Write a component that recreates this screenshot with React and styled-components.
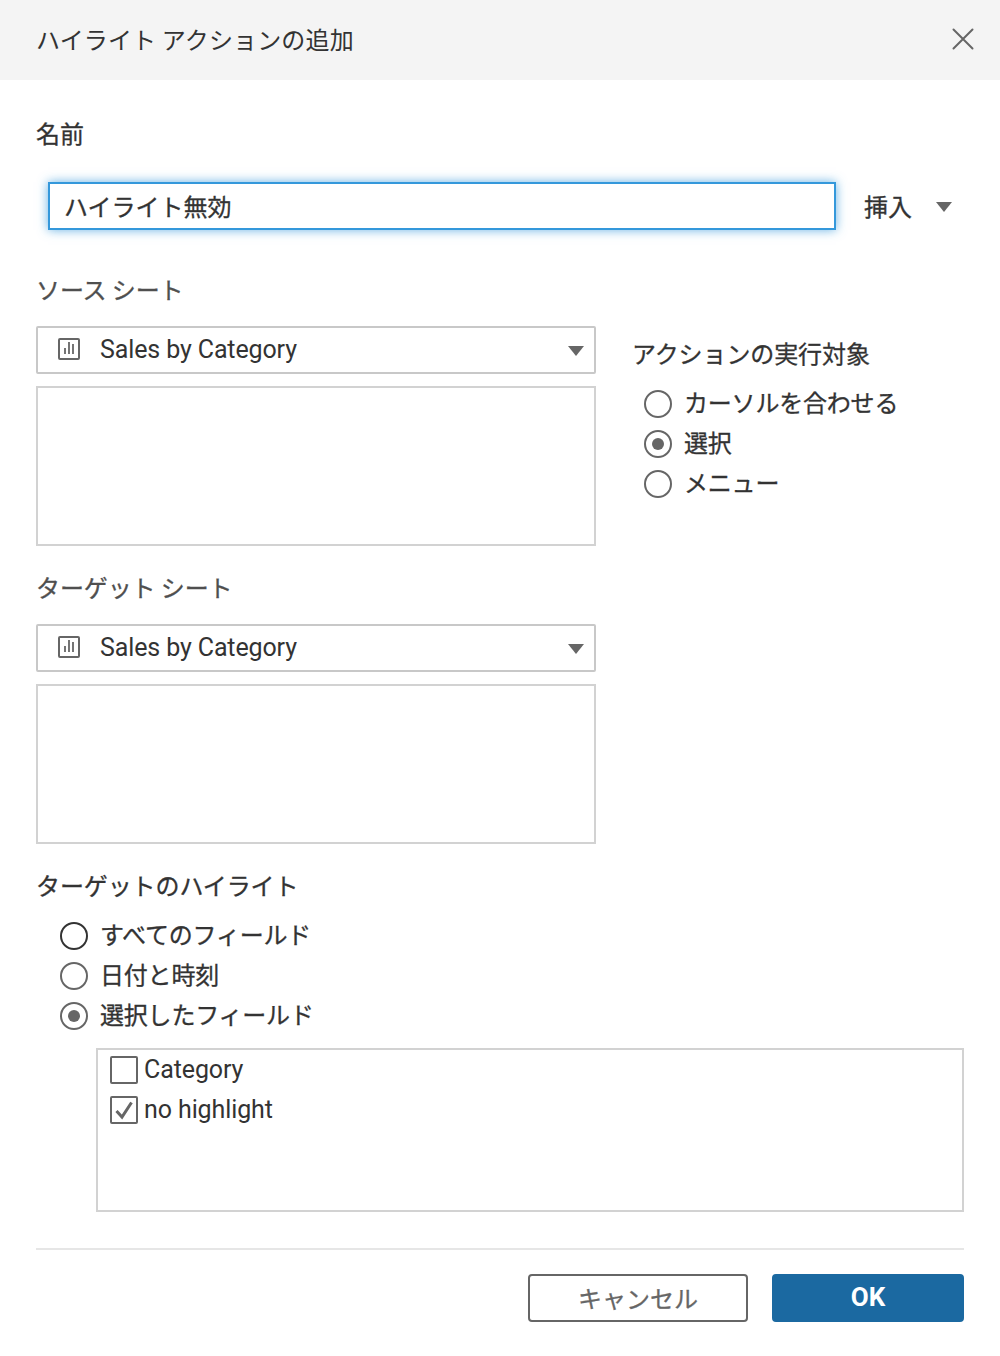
import React from 'react';
import styled, { createGlobalStyle } from 'styled-components';

const GlobalStyle = createGlobalStyle`
  * {
    box-sizing: border-box;
  }

  body {
    margin: 0;
    background-color: #fff;
    color: #333;
    font-family: 'Noto Sans CJK JP', sans-serif;
    font-size: 24px;
    line-height: 40px;
  }
`;

const Dialog = styled.div`
  width: 1000px;
  height: 1356px;
`;

const Header = styled.header`
  display: flex;
  justify-content: space-between;
  align-items: center;
  height: 80px;
  padding: 0 26px 2px 36px;
  background-color: #f4f4f4;
  letter-spacing: 0.15px;
`;

const CloseButton = styled.button`
  display: flex;
  padding: 0;
  border: none;
  background-color: transparent;
  cursor: pointer;
`;

const Body = styled.main`
  padding: 34px 36px 0;
`;

const Label = styled.div`
  height: 40px;
  color: ${({ $muted }) => ($muted ? '#4f4f4f' : '#333')};
  line-height: 38px;
  letter-spacing: -0.1px;
  white-space: nowrap;
  -webkit-text-stroke: 0.3px;
`;

const NameRow = styled.div`
  display: flex;
  align-items: center;
  height: 48px;
  margin: 28px 0 40px;
  padding: 0 12px;
`;

const NameInput = styled.input`
  width: 788px;
  height: 48px;
  padding: 0 14px 1px;
  border: 2px solid #3498db;
  outline: none;
  color: #333;
  font: inherit;
  box-shadow: 0 0 10px rgba(52, 152, 219, 0.75);
  -webkit-text-stroke: 0.3px;
`;

const InsertButton = styled.button`
  display: flex;
  align-items: center;
  gap: 24px;
  margin-left: 28px;
  padding: 0;
  border: none;
  background-color: transparent;
  color: #333;
  font: inherit;
  white-space: nowrap;
  -webkit-text-stroke: 0.3px;
`;

const Arrow = styled.span`
  width: 0;
  height: 0;
  margin-top: 2px;
  border-top: 10px solid #666;
  border-left: 8px solid transparent;
  border-right: 8px solid transparent;
`;

const Sheets = styled.section`
  display: flex;
  gap: 36px;
`;

const SheetColumn = styled.div`
  width: 560px;
`;

const RunOn = styled.div`
  padding-top: 64px;
`;

const Select = styled.div`
  display: flex;
  align-items: center;
  height: 48px;
  margin-top: 16px;
  padding: 0 10px 0 20px;
  border: 2px solid #c8c8c8;
  border-radius: 2px;
`;

const SelectText = styled.span`
  flex: 1;
  margin-left: 20px;
  font-family: Roboto, sans-serif;
  font-size: 25px;
  letter-spacing: -0.12px;
`;

const List = styled.div`
  height: 160px;
  margin: 12px 0 22px;
  border: 2px solid #d2d2d2;
`;

const Options = styled.div`
  display: flex;
  flex-direction: column;
  margin-top: 10px;
  padding-left: ${({ $indent }) => $indent}px;
`;

const Option = styled.label`
  display: flex;
  align-items: center;
  gap: 12px;
  height: 40px;
  white-space: nowrap;
`;

const OptionText = styled.span`
  padding-bottom: 4px;
  letter-spacing: -0.2px;
  -webkit-text-stroke: 0.3px;
`;

const Radio = styled.span`
  display: flex;
  justify-content: center;
  align-items: center;
  width: 28px;
  height: 28px;
  border: 2px solid ${({ $dark }) => ($dark ? '#333' : '#666')};
  border-radius: 50%;

  &::after {
    content: '';
    width: 12px;
    height: 12px;
    border-radius: 50%;
    background-color: ${({ $checked }) => ($checked ? '#666' : 'transparent')};
  }
`;

const FieldList = styled.div`
  height: 164px;
  margin: 12px 0 36px 60px;
  padding-left: 12px;
  border: 2px solid #d2d2d2;
`;

const Field = styled.label`
  display: flex;
  align-items: center;
  gap: 6px;
  height: 40px;
  font-family: Roboto, sans-serif;
  font-size: 25px;
  letter-spacing: -0.1px;
`;

const Checkbox = styled.span`
  display: flex;
  width: 28px;
  height: 28px;
  border: 2px solid #666;
  border-radius: 2px;
`;

const Footer = styled.footer`
  display: flex;
  justify-content: flex-end;
  gap: 24px;
  padding-top: 24px;
  border-top: 2px solid #e6e6e6;
`;

const Button = styled.button`
  width: ${({ $primary }) => ($primary ? 192 : 220)}px;
  height: 48px;
  padding: 0 0 ${({ $primary }) => ($primary ? 3 : 1)}px;
  border: 2px solid ${({ $primary }) => ($primary ? '#1b69a1' : '#666')};
  border-radius: 4px;
  background-color: ${({ $primary }) => ($primary ? '#1b69a1' : '#fff')};
  color: ${({ $primary }) => ($primary ? '#fff' : '#666')};
  font-family: ${({ $primary }) => ($primary ? 'Roboto' : "'Noto Sans CJK JP'")}, sans-serif;
  font-size: ${({ $primary }) => ($primary ? 26 : 24)}px;
  font-weight: ${({ $primary }) => ($primary ? 700 : 400)};
  line-height: 40px;
  cursor: pointer;
  -webkit-text-stroke: ${({ $primary }) => ($primary ? 0 : 0.3)}px;
`;

const CloseIcon = () => (
  <svg width='22' height='22' viewBox='0 0 22 22' fill='none'>
    <path d='M1.5 1.5l19 19M20.5 1.5l-19 19' stroke='#666' strokeWidth='2' strokeLinecap='round' />
  </svg>
);

const SheetSvg = styled.svg`
  margin-bottom: 2px;
`;

const SheetIcon = () => (
  <SheetSvg width='22' height='22' viewBox='0 0 22 22' fill='none' stroke='#666' strokeWidth='2'>
    <rect x='1' y='1' width='20' height='20' rx='1' />
    <path d='M7 10v6M11 4v12M15 6v10' strokeWidth='1.8' />
  </SheetSvg>
);

const CheckIcon = () => (
  <svg width='24' height='24' viewBox='0 0 24 24' fill='none'>
    <path d='M4.5 13l5.5 6L19.5 4.5' stroke='#666' strokeWidth='3' />
  </svg>
);

// eslint-disable-next-line react/prop-types
const SheetPicker = ({ label }) => (
  <>
    <Label $muted>{label}</Label>
    <Select>
      <SheetIcon />
      <SelectText>Sales by Category</SelectText>
      <Arrow />
    </Select>
    <List />
  </>
);

// eslint-disable-next-line react/prop-types
const RadioOption = ({ text, checked, dark }) => (
  <Option>
    <Radio $checked={checked} $dark={dark} />
    <OptionText>{text}</OptionText>
  </Option>
);

const App = () => (
  <Dialog>
    <GlobalStyle />
    <Header>
      <span>ハイライト アクションの追加</span>
      <CloseButton type='button' aria-label='閉じる'>
        <CloseIcon />
      </CloseButton>
    </Header>
    <Body>
      <Label>名前</Label>
      <NameRow>
        <NameInput defaultValue='ハイライト無効' />
        <InsertButton type='button'>
          挿入
          <Arrow />
        </InsertButton>
      </NameRow>
      <Sheets>
        <SheetColumn>
          <SheetPicker label='ソース シート' />
          <SheetPicker label='ターゲット シート' />
        </SheetColumn>
        <RunOn>
          <Label>アクションの実行対象</Label>
          <Options $indent={12}>
            <RadioOption text='カーソルを合わせる' />
            <RadioOption text='選択' checked />
            <RadioOption text='メニュー' />
          </Options>
        </RunOn>
      </Sheets>
      <Label>ターゲットのハイライト</Label>
      <Options $indent={24}>
        <RadioOption text='すべてのフィールド' dark />
        <RadioOption text='日付と時刻' />
        <RadioOption text='選択したフィールド' checked />
      </Options>
      <FieldList>
        <Field>
          <Checkbox />
          Category
        </Field>
        <Field>
          <Checkbox>
            <CheckIcon />
          </Checkbox>
          no highlight
        </Field>
      </FieldList>
      <Footer>
        <Button type='button'>キャンセル</Button>
        <Button type='button' $primary>
          OK
        </Button>
      </Footer>
    </Body>
  </Dialog>
);

export default App;
